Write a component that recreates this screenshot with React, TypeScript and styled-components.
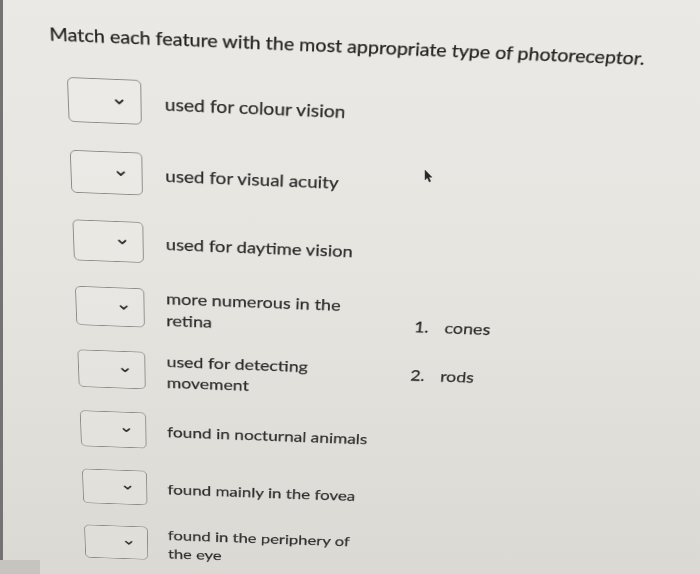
import React from 'react';
import styled, { createGlobalStyle } from 'styled-components';

const GlobalStyle = createGlobalStyle`
  html, body {
    margin: 0;
    padding: 0;
  }
  body {
    width: 700px;
    height: 574px;
    overflow: hidden;
    background: linear-gradient(180deg, #ebe9e5 0%, #e7e5e0 45%, #dad9d3 100%);
    font-family: Lato, 'Open Sans', sans-serif;
  }
`;

//styles
const Screen = styled.div`
  position: relative;
  display: flex;
  width: 700px;
  height: 574px;
  overflow: hidden;
`;

const Bezel = styled.div`
  flex: 0 0 3px;
  background: #737373;
`;

// the photo was taken at an angle: tilt the sheet back and skew it a little
const Sheet = styled.div`
  flex: 1;
  padding: 28px 0 0 45px;
  transform-origin: 184px 0;
  transform: perspective(1000px) rotateX(-17.3deg) skewY(2.5deg);
  -webkit-text-stroke: 0.25px currentColor;
`;

const Title = styled.h1`
  margin: 0;
  font-size: 20px;
  line-height: 26px;
  font-weight: 400;
  color: #222;
  white-space: nowrap;
`;

const Body = styled.div`
  display: flex;
  align-items: center;
  margin-top: 18px;
`;

const Prompts = styled.div`
  display: flex;
  flex-direction: column;
  padding-left: 16px;
`;

const Row = styled.div`
  display: flex;
  align-items: center;
  gap: 24px;
  height: 82px;
`;

const Select = styled.div`
  display: flex;
  flex: 0 0 auto;
  align-items: center;
  justify-content: flex-end;
  box-sizing: border-box;
  width: 76px;
  height: 50px;
  padding-right: 17px;
  border: 1.5px solid #8a8a88;
  border-radius: 6px;
  background: rgba(255, 255, 255, 0.12);
  color: #2a2a2a;
`;

const Label = styled.div`
  width: 240px;
  font-size: 20px;
  line-height: 28px;
  color: #2a2a2a;
`;

const Answers = styled.ol`
  display: flex;
  flex-direction: column;
  gap: 38px;
  margin: 2px 0 0 36px;
  padding: 0;
  list-style: none;
`;

const Answer = styled.li`
  display: flex;
  font-size: 20px;
  line-height: 26px;
  color: #2a2a2a;
`;

const Num = styled.span`
  width: 34px;
  color: #222;
`;

const Cursor = styled.svg`
  position: absolute;
  left: 424px;
  top: 169px;
`;

const Corner = styled.div`
  position: absolute;
  left: 0;
  bottom: 0;
  width: 40px;
  height: 14px;
  background: #c6c4be;
`;

const prompts = [
  'used for colour vision',
  'used for visual acuity',
  'used for daytime vision',
  'more numerous in the retina',
  'used for detecting movement',
  'found in nocturnal animals',
  'found mainly in the fovea',
  'found in the periphery of the eye',
];

const answers = ['cones', 'rods'];

function Chevron() {
  return (
    <svg width="10" height="7" viewBox="0 0 10 7">
      <polyline
        points="1.5,1.5 5,5 8.5,1.5"
        fill="none"
        stroke="currentColor"
        strokeWidth="2"
        strokeLinecap="round"
        strokeLinejoin="round"
      />
    </svg>
  );
}

function App() {
  return (
    <Screen>
      <GlobalStyle />
      <Bezel />
      <Sheet>
        <Title>Match each feature with the most appropriate type of photoreceptor.</Title>
        <Body>
          <Prompts>
            {prompts.map((p) => (
              <Row key={p}>
                <Select>
                  <Chevron />
                </Select>
                <Label>{p}</Label>
              </Row>
            ))}
          </Prompts>
          <Answers>
            {answers.map((a, i) => (
              <Answer key={a}>
                <Num>{i + 1}.</Num>
                {a}
              </Answer>
            ))}
          </Answers>
        </Body>
      </Sheet>
      <Cursor width="9" height="14" viewBox="0 0 9 14">
        <path d="M1 1 L1 11 L3.3 8.8 L5.2 13 L6.7 12.3 L4.9 8.2 L8 8.2 Z" fill="#262626" stroke="#4a4a4a" strokeWidth="0.5" />
      </Cursor>
      <Corner />
    </Screen>
  );
}

export default App;
